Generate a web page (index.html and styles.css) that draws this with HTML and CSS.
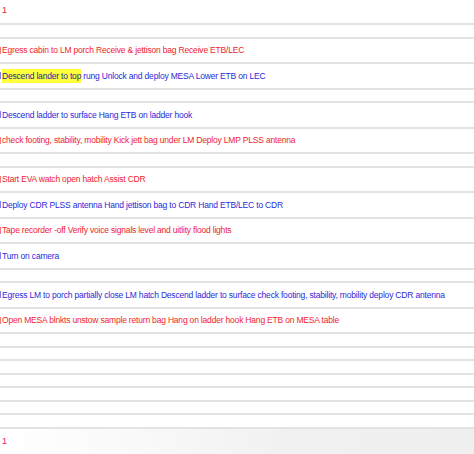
FILE: index.html
```html
<!DOCTYPE html>
<html>
<head>
<meta charset="utf-8">
<link rel="stylesheet" href="styles.css">
</head>
<body>
<div class="sheet">
  <div class="row top red"><span class="txt">1</span></div>
  <div class="row gap"></div>
  <div class="row red"><span class="mark"></span><span class="txt">Egress cabin to LM porch Receive &amp; jettison bag Receive ETB/LEC</span></div>
  <div class="row blue"><span class="mark"></span><span class="txt"><span class="hl">Descend lander to top</span> rung Unlock and deploy MESA Lower ETB on LEC</span></div>
  <div class="row gap"></div>
  <div class="row blue"><span class="mark"></span><span class="txt">Descend ladder to surface Hang ETB on ladder hook</span></div>
  <div class="row red"><span class="mark"></span><span class="txt">check footing, stability, mobility Kick jett bag under LM Deploy LMP PLSS antenna</span></div>
  <div class="row gap"></div>
  <div class="row red"><span class="mark"></span><span class="txt">Start EVA watch open hatch Assist CDR</span></div>
  <div class="row blue"><span class="mark"></span><span class="txt">Deploy CDR PLSS antenna Hand jettison bag to CDR Hand ETB/LEC to CDR</span></div>
  <div class="row red"><span class="mark"></span><span class="txt">Tape recorder -off Verify voice signals level and uitlity flood lights</span></div>
  <div class="row blue"><span class="mark"></span><span class="txt">Turn on camera</span></div>
  <div class="row gap"></div>
  <div class="row blue"><span class="mark"></span><span class="txt">Egress LM to porch partially close LM hatch Descend ladder to surface check footing, stability, mobility deploy CDR antenna</span></div>
  <div class="row red"><span class="mark"></span><span class="txt">Open MESA blnkts unstow sample return bag Hang on ladder hook Hang ETB on MESA table</span></div>
  <div class="row gap"></div>
  <div class="row gap"></div>
  <div class="row gap"></div>
  <div class="row gap"></div>
  <div class="row gap"></div>
  <div class="row gap"></div>
  <div class="row gap"></div>
  <div class="row bottom pink"><span class="txt">1</span></div>
</div>
</body>
</html>
```

FILE: styles.css
```css
html, body {
  margin: 0;
  padding: 0;
  background: #ffffff;
}
body {
  width: 474px;
  height: 454px;
  overflow: hidden;
  font-family: "Liberation Sans", Arial, sans-serif;
  font-size: 8.5px;
  letter-spacing: -0.19px;
}
.sheet {
  display: flex;
  flex-direction: column;
}
.row {
  height: 25.5px;
  box-sizing: border-box;
  border-bottom: 2px solid #e3e3e3;
  display: flex;
  align-items: center;
  white-space: nowrap;
  overflow: hidden;
}
.row.top {
  height: 25px;
  align-items: flex-start;
  padding-top: 5px;
  font-size: 9px;
}
.row.gap {
  height: 13.5px;
}
.row.bottom {
  height: 27.5px;
  border-bottom: 2px solid #cfcfcf;
  background: linear-gradient(to right, #ffffff 0%, #fafafa 25%, #f1f1f1 60%, #efefef 100%);
  padding-bottom: 1px;
  font-size: 9px;
}
.txt {
  padding-left: 2px;
}
.mark {
  width: 1px;
  height: 7px;
  background: currentColor;
  opacity: 0.6;
  margin-right: -1px;
}
.red { color: #f0222e; }
.blue { color: #2a2ad8; }
.pink { color: #e4285a; }
.hl {
  background: #ffff3a;
  color: #1e1e9c;
  padding: 2px 0 2px 0;
}
```
